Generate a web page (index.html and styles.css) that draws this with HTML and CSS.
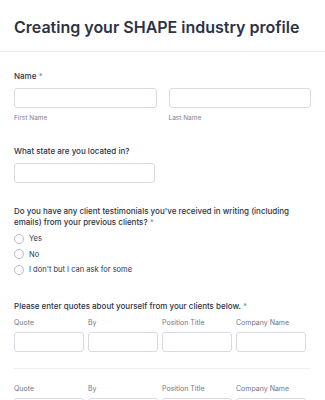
FILE: index.html
```html
<!DOCTYPE html>
<html lang="en">
<head>
    <meta charset="UTF-8">
    <meta name="viewport" content="width=device-width, initial-scale=1.0">
    <title>Creating your SHAPE industry profile</title>
    <link rel="stylesheet" href="styles.css">
</head>
<body>
    <div class="form-header">
        <h1>Creating your SHAPE industry profile</h1>
    </div>

    <div class="form">
        <!-- Name -->
        <div class="field field-name">
            <label class="label">Name <span class="req">*</span></label>
            <div class="name-row">
                <div class="name-col">
                    <input class="input" type="text">
                    <span class="sublabel">First Name</span>
                </div>
                <div class="name-col">
                    <input class="input" type="text">
                    <span class="sublabel">Last Name</span>
                </div>
            </div>
        </div>

        <!-- State -->
        <div class="field field-state">
            <label class="label">What state are you located in?</label>
            <input class="input input-state" type="text">
        </div>

        <!-- Testimonials -->
        <div class="field field-radio">
            <label class="label label-long">Do you have any client testimonials you've received in writing (including emails) from your previous clients? <span class="req">*</span></label>
            <div class="radio-list">
                <div class="radio-row"><span class="radio"></span>Yes</div>
                <div class="radio-row"><span class="radio"></span>No</div>
                <div class="radio-row"><span class="radio"></span>I don't but I can ask for some</div>
            </div>
        </div>

        <!-- Quotes -->
        <div class="field field-quotes">
            <label class="label">Please enter quotes about yourself from your clients below. <span class="req">*</span></label>
            <div class="quote-grid">
                <span class="col-head">Quote</span>
                <span class="col-head">By</span>
                <span class="col-head">Position Title</span>
                <span class="col-head">Company Name</span>
                <input class="input" type="text">
                <input class="input" type="text">
                <input class="input" type="text">
                <input class="input" type="text">
            </div>
            <div class="quote-divider"></div>
            <div class="quote-grid">
                <span class="col-head">Quote</span>
                <span class="col-head">By</span>
                <span class="col-head">Position Title</span>
                <span class="col-head">Company Name</span>
                <input class="input" type="text">
                <input class="input" type="text">
                <input class="input" type="text">
                <input class="input" type="text">
            </div>
        </div>
    </div>
</body>
</html>
```

FILE: styles.css
```css
* {
    margin: 0;
    padding: 0;
    box-sizing: border-box;
}

body {
    font-family: Inter, 'Noto Sans', sans-serif;
    background: #ffffff;
    color: #2c3345;
    overflow: hidden;
}

.form-header {
    padding: 16px 14px 13px;
    border-bottom: 1px solid #eaebef;
}

.form-header h1 {
    font-size: 16px;
    line-height: 22px;
    font-weight: 600;
    color: #2c3345;
    white-space: nowrap;
}

.form {
    padding: 0 14px;
}

.label {
    display: block;
    font-size: 8px;
    line-height: 12px;
    font-weight: 500;
    color: #2c3345;
}

.req {
    color: #8a8f9c;
}

.input {
    display: block;
    width: 100%;
    height: 20px;
    border: 1px solid #d8dbe2;
    border-radius: 3px;
    background: #fff;
}

.sublabel {
    display: block;
    font-size: 6.5px;
    line-height: 8px;
    color: #7b8194;
    margin-top: 6px;
}

/* name */
.field-name {
    margin-top: 18px;
}

.name-row {
    display: flex;
    gap: 12px;
    margin-top: 6px;
}

.name-col {
    flex: 1;
}

/* state */
.field-state {
    margin-top: 23px;
}

.input-state {
    width: 141px;
    margin-top: 6px;
}

/* radios */
.field-radio {
    margin-top: 23px;
}

.label-long {
    line-height: 11px;
}

.radio-list {
    margin-top: 3px;
}

.radio-row {
    display: flex;
    align-items: center;
    height: 15.5px;
    font-size: 7.5px;
    color: #2c3345;
}

.radio {
    width: 10px;
    height: 10px;
    border: 1px solid #b9bdc8;
    border-radius: 50%;
    margin-right: 5px;
    flex-shrink: 0;
}

/* quotes */
.field-quotes {
    margin-top: 22px;
}

.quote-grid {
    display: grid;
    grid-template-columns: repeat(4, 70px);
    column-gap: 4px;
    row-gap: 4px;
    margin-top: 6px;
}

.col-head {
    font-size: 7px;
    line-height: 10px;
    color: #6f7689;
}

.quote-divider {
    width: 297px;
    border-top: 1px solid #eceef2;
    margin-top: 16px;
}

.quote-divider + .quote-grid {
    margin-top: 15px;
}
```
